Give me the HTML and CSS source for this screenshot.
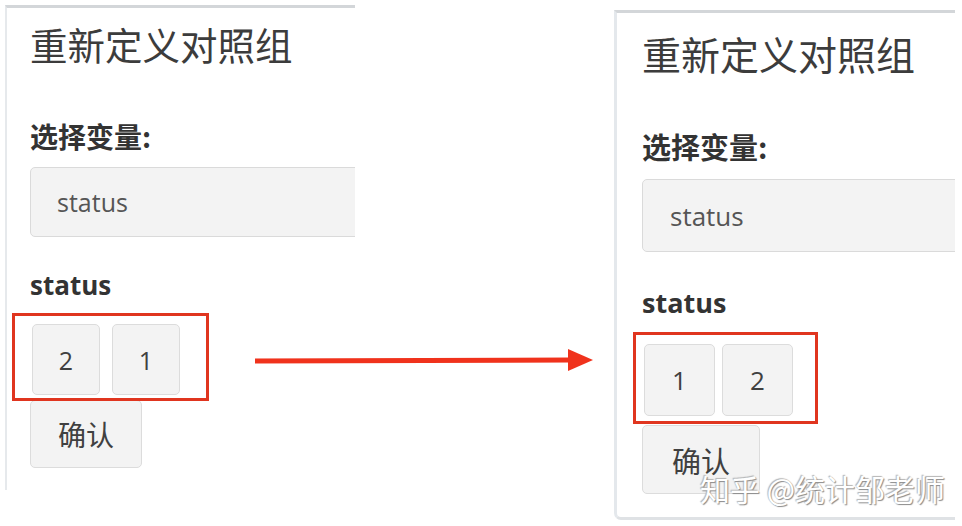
FILE: index.html
```html
<!DOCTYPE html>
<html lang="zh-CN">
<head>
<meta charset="utf-8">
<title>重新定义对照组</title>
<link rel="stylesheet" href="styles.css">
</head>
<body>
<div class="canvas">
  <section class="panel panel-left">
    <h2 class="title">重新定义对照组</h2>
    <div class="label">选择变量:</div>
    <div class="select">status</div>
    <div class="var-label">status</div>
    <div class="levels">
      <button class="level">2</button>
      <button class="level">1</button>
    </div>
    <button class="confirm">确认</button>
  </section>

  <section class="panel panel-right">
    <h2 class="title">重新定义对照组</h2>
    <div class="label">选择变量:</div>
    <div class="select">status</div>
    <div class="var-label">status</div>
    <div class="levels">
      <button class="level">1</button>
      <button class="level">2</button>
    </div>
    <button class="confirm">确认</button>
    <div class="watermark">知乎 @统计邹老师</div>
  </section>

  <svg class="arrow" width="338" height="22" viewBox="0 0 338 22">
    <line x1="0" y1="12" x2="316" y2="11" stroke="#f0321c" stroke-width="5"/>
    <polygon points="313,0 338,11 313,22" fill="#f0321c"/>
  </svg>
</div>
</body>
</html>
```
FILE: styles.css
```css
html, body {
  margin: 0;
  padding: 0;
  background: #ffffff;
}

body {
  width: 962px;
  height: 526px;
  overflow: hidden;
  font-family: "Open Sans", "Noto Sans CJK SC", sans-serif;
  color: #333333;
}

.canvas {
  position: relative;
  display: flex;
  align-items: flex-start;
  width: 962px;
  height: 526px;
}

.panel {
  position: relative;
  box-sizing: border-box;
  background: #ffffff;
  overflow: hidden;
  display: flex;
  flex-direction: column;
  align-items: flex-start;
}

.panel-left {
  margin: 5px 0 0 5px;
  width: 350px;
  height: 485px;
  border-top: 3px solid #d3d6d9;
  border-left: 2px solid #e6e9ec;
  padding-left: 23px;
}

.panel-right {
  margin: 10px 0 0 259px;
  width: 341px;
  height: 510px;
  border-top: 3px solid #d3d6d9;
  border-left: 3px solid #e4e8ec;
  border-bottom: 3px solid #dfe2e5;
  border-bottom-left-radius: 7px;
  padding-left: 25px;
}

.title {
  margin: 15px 0 0 0;
  font-family: "Noto Sans CJK SC", sans-serif;
  font-weight: 400;
  font-size: 37.5px;
  line-height: 42px;
  color: #3c3c3c;
  white-space: nowrap;
}

.label {
  margin-top: 56px;
  font-family: "Noto Sans CJK SC", sans-serif;
  font-weight: 700;
  font-size: 28px;
  line-height: 30px;
  color: #333333;
  white-space: nowrap;
}

.select {
  box-sizing: border-box;
  margin-top: 16px;
  width: 380px;
  height: 70px;
  padding-left: 26px;
  display: flex;
  align-items: center;
  background: #f3f3f3;
  border: 1px solid #dadada;
  border-radius: 5px;
  font-size: 25px;
  color: #555555;
}

.var-label {
  margin-top: 33px;
  font-weight: 700;
  font-size: 26px;
  line-height: 30px;
  color: #333333;
}

.levels {
  position: relative;
  display: flex;
  gap: 12px;
  margin: 24px 0 0 2px;
}

.levels::after {
  content: "";
  position: absolute;
  left: -20px;
  top: -11px;
  width: 197px;
  height: 88px;
  box-sizing: border-box;
  border: 3px solid #e0351f;
  pointer-events: none;
}

.level {
  box-sizing: border-box;
  width: 68px;
  height: 71px;
  padding: 0;
  background: #f3f3f3;
  border: 1px solid #dcdcdc;
  border-radius: 5px;
  font-family: "Open Sans", sans-serif;
  font-size: 25px;
  color: #404040;
}

.confirm {
  box-sizing: border-box;
  margin-top: 5px;
  width: 112px;
  height: 68px;
  padding: 0;
  background: #f3f3f3;
  border: 1px solid #dcdcdc;
  border-radius: 5px;
  font-family: "Noto Sans CJK SC", sans-serif;
  font-size: 28px;
  color: #404040;
}

/* right panel, captured at a slightly larger scale */
.panel-right .title {
  margin-top: 18px;
  font-size: 39px;
  line-height: 44px;
}

.panel-right .label {
  margin-top: 55px;
  font-size: 29px;
  line-height: 32px;
}

.panel-right .select {
  margin-top: 17px;
  height: 73px;
  padding-left: 27px;
  font-size: 26px;
}

.panel-right .var-label {
  margin-top: 35px;
  font-size: 27px;
  line-height: 32px;
}

.panel-right .levels {
  gap: 7px;
  margin-top: 25px;
}

.panel-right .levels::after {
  left: -11px;
  top: -12px;
  width: 185px;
  height: 92px;
}

.panel-right .level {
  width: 71px;
  height: 72px;
  font-size: 26px;
}

.panel-right .confirm {
  margin-top: 9px;
  width: 118px;
  height: 69px;
  font-size: 29px;
}

.watermark {
  position: absolute;
  left: 83px;
  top: 457px;
  font-family: "Noto Sans CJK SC", sans-serif;
  font-size: 30px;
  line-height: 36px;
  white-space: nowrap;
  color: #ffffff;
  text-shadow: 1px 1px 1px #8a8a8a, -1px -1px 1px #b5b5b5;
}

.arrow {
  position: absolute;
  left: 255px;
  top: 349px;
}
```
